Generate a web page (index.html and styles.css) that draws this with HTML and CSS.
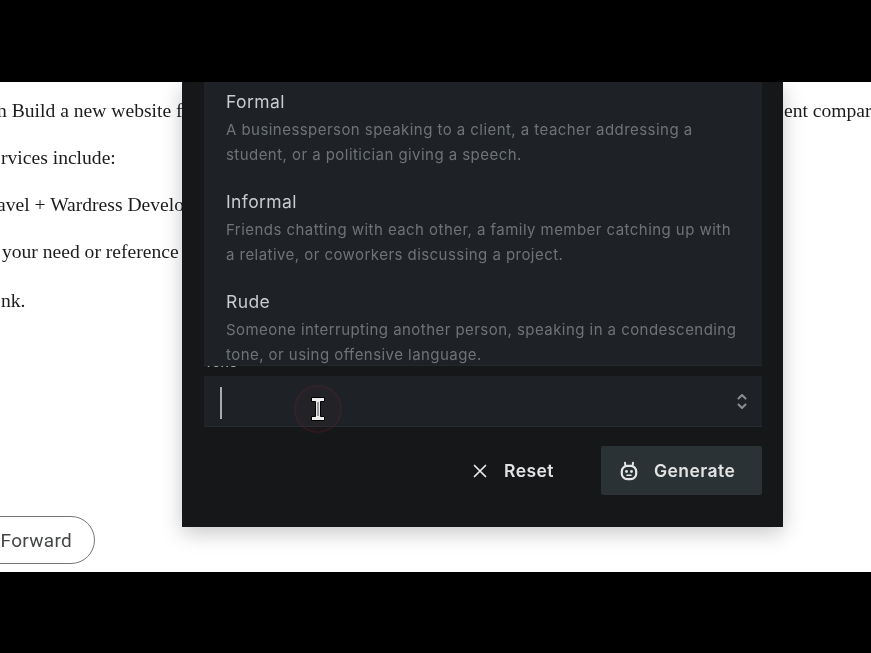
FILE: index.html
```html
<!DOCTYPE html>
<html lang="en">
<head>
<meta charset="utf-8">
<title>Generate reply</title>
<link rel="stylesheet" href="styles.css">
</head>
<body>
<div class="frame">
  <div class="bar-top"></div>
  <main class="stage">
    <section class="doc-left">
      <div class="doc-lines">
        <p class="pull">n Build a new website for</p>
        <p class="push">rvices include:</p>
        <p class="pull">avel + Wardress Development</p>
        <p class="pull">&nbsp;your need or reference site</p>
        <p class="push last">nk.</p>
      </div>
      <button class="forward" type="button">Forward</button>
    </section>
    <section class="dialog">
      <div class="menu">
        <div class="option">
          <div class="option-title">Formal</div>
          <div class="option-text">A businessperson speaking to a client, a teacher addressing a<br>student, or a politician giving a speech.</div>
        </div>
        <div class="option">
          <div class="option-title">Informal</div>
          <div class="option-text">Friends chatting with each other, a family member catching up with<br>a relative, or coworkers discussing a project.</div>
        </div>
        <div class="option">
          <div class="option-title">Rude</div>
          <div class="option-text">Someone interrupting another person, speaking in a condescending<br>tone, or using offensive language.</div>
        </div>
      </div>
      <label class="field-label">Tone</label>
      <div class="select">
        <span class="caret"></span>
        <svg class="chevrons" viewBox="0 0 12 20" width="12" height="20" aria-hidden="true"><path d="M2.5 7.5 6 4 9.5 7.5M2.5 13.5 6 17 9.5 13.5" fill="none" stroke="#8b8f92" stroke-width="2" stroke-linecap="round" stroke-linejoin="round"/></svg>
        <span class="pointer-halo"></span>
        <svg class="pointer" viewBox="0 0 16 26" width="16" height="26" aria-hidden="true"><path d="M1.5 1.5h13v4h-4v15h4v4h-13v-4h4v-15h-4z" fill="#ececec" stroke="#000" stroke-width="1"/><path d="M8 6v14" stroke="#666" stroke-width="1.2"/></svg>
      </div>
      <div class="actions">
        <button class="btn btn-reset" type="button">
          <svg viewBox="0 0 16 16" width="16" height="16" aria-hidden="true"><path d="M2.5 2.5l11 11M13.5 2.5l-11 11" stroke="#ececec" stroke-width="1.7" stroke-linecap="round"/></svg>
          Reset
        </button>
        <button class="btn btn-generate" type="button">
          <svg viewBox="0 0 20 20" width="20" height="20" aria-hidden="true"><path d="M6.5 5.2 6 1.8M13.5 5.2 14 1.8" stroke="#e6e6e6" stroke-width="2" stroke-linecap="round"/><rect x="2.8" y="4.8" width="14.4" height="13.4" rx="5.5" fill="none" stroke="#e6e6e6" stroke-width="2.2"/><circle cx="7.5" cy="10.5" r="1.4" fill="#e6e6e6"/><circle cx="12.5" cy="10.5" r="1.4" fill="#e6e6e6"/><path d="M8 14.2h4" stroke="#e6e6e6" stroke-width="1.6" stroke-linecap="round"/></svg>
          Generate
        </button>
      </div>
    </section>
    <section class="doc-right">
      <p>ent compar</p>
    </section>
  </main>
  <div class="bar-bottom"></div>
</div>
</body>
</html>
```
FILE: styles.css
```css
* { box-sizing: border-box; }
html, body { margin: 0; height: 100%; background: #000; overflow: hidden; }
.frame { width: 871px; height: 653px; display: flex; flex-direction: column; filter: blur(0.6px); }
.bar-top { height: 82px; background: #000; flex: none; }
.bar-bottom { height: 81px; background: #000; flex: none; }
.stage { height: 490px; flex: none; background: #fff; display: flex; align-items: flex-start; overflow: hidden; }

.doc-left { width: 182px; height: 100%; flex: none; overflow: hidden; display: flex; flex-direction: column; padding-top: 18px; }
.doc-lines p, .doc-right p { margin: 0 0 25px; font: 19.6px/22px "Liberation Serif", serif; color: #1c1c1c; white-space: nowrap; }
.doc-lines .pull { margin-left: -3px; }
.doc-lines .push { margin-left: 1px; }
.doc-lines .last { margin-top: 27px; }
.forward { margin-top: auto; margin-bottom: 8px; margin-left: -40px; width: 135px; height: 48px; flex: none; border: 1px solid #747775; border-radius: 24px; background: #fff; color: #444746; font: 400 19px/1 Roboto, sans-serif; letter-spacing: .3px; text-align: right; padding: 0 22px 0 0; }

.dialog { width: 601px; height: 445px; flex: none; background: #161718; position: relative; z-index: 1; box-shadow: 0 6px 20px rgba(0,0,0,.22); padding: 271px 21px 0 22px; display: flex; flex-direction: column; }
.menu { position: absolute; left: 22px; right: 21px; top: 0; height: 284px; background: #1e2226; overflow: hidden; padding: 8px 22px 0; border-bottom: 1px solid #23272b; }
.option { height: 100px; }
.option-title { font: 400 17.5px/23px Inter, sans-serif; letter-spacing: .4px; color: #c9cbcc; }
.option-text { font: 400 15px/25px Inter, sans-serif; color: #6f7377; margin-top: 4px; white-space: nowrap; letter-spacing: .45px; }
.field-label { font: 500 14px/18px Inter, sans-serif; color: #aaa; height: 23px; }
.select { height: 51px; width: 558px; flex: none; background: #1e2226; position: relative; border-bottom: 1px solid #262b2f; display: flex; align-items: center; justify-content: space-between; padding: 0 14px 0 16px; }
.caret { width: 1.5px; height: 32px; margin-top: 3px; background: #a8abad; }
.pointer { position: absolute; left: 106px; top: 20px; }
.pointer-halo { position: absolute; left: 90px; top: 9px; width: 48px; height: 48px; border-radius: 50%; background: rgba(120,40,50,.06); box-shadow: inset 0 0 0 1.5px rgba(130,40,60,.2); }
.actions { display: flex; justify-content: flex-end; align-items: center; gap: 47px; margin-top: 19px; }
.btn { border: 0; background: transparent; color: #e2e3e3; font: 600 17.5px/1 Inter, sans-serif; letter-spacing: .45px; display: flex; align-items: center; height: 49px; padding: 0; }
.btn-reset { gap: 16px; }
.btn-generate { width: 161px; background: #2a3236; gap: 15px; padding-left: 18px; border-radius: 2px; }

.doc-right { flex: 1; padding-top: 18px; overflow: hidden; padding-left: 1px; }
```
